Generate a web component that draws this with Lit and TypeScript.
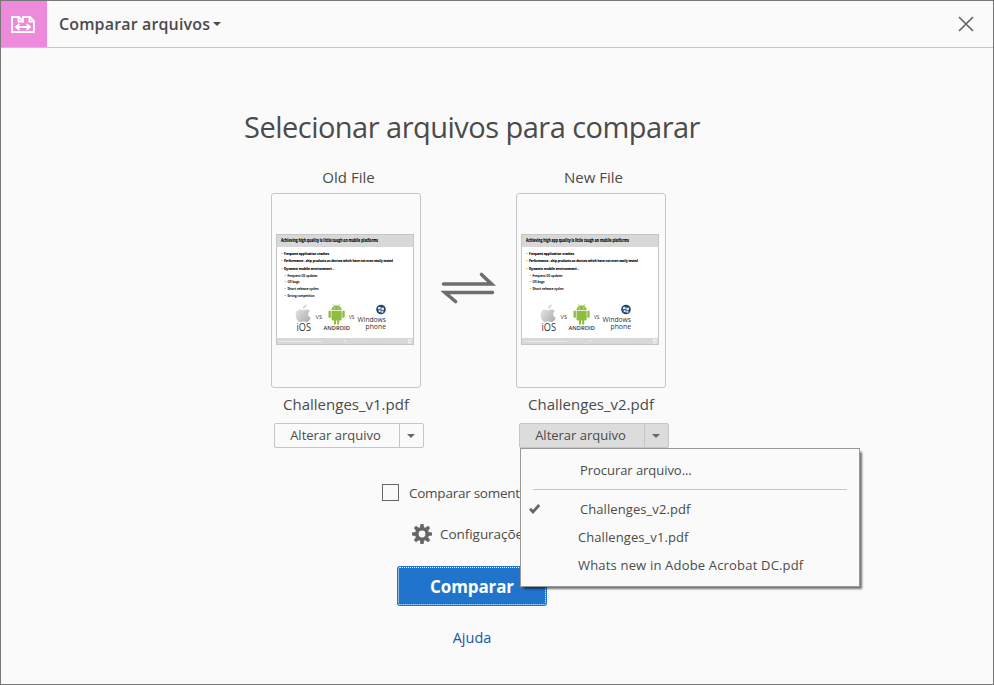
import { LitElement, html, css, svg } from "lit";
import { customElement, property } from "lit/decorators.js";

@customElement("slide-preview")
class SlidePreview extends LitElement {
  @property() heading = "";
  @property({ type: Number }) headingWidth = 97;
  @property({ type: Boolean }) full = false;

  static styles = css`
    :host { display: block; width: 138px; height: 111px; }
    svg { display: block; overflow: visible; }
    text { font-family: "Open Sans", "Noto Sans", sans-serif; }
    .head { font-size: 5px; font-weight: 700; fill: #000; stroke: #000; stroke-width: 0.12px; }
    .item { font-size: 4.1px; font-weight: 700; fill: #000; stroke: #000; stroke-width: 0.15px; }
    .sub { font-size: 3.7px; font-weight: 600; fill: #111; stroke: #111; stroke-width: 0.1px; }
    .os { font-family: "Open Sans", sans-serif; fill: #333; }
    .foot { font-size: 2.4px; fill: #fff; font-weight: 700; }
  `;

  line(label: string, x: number, y: number, width: number, cls: string) {
    return svg`<rect x=${x - 3} y=${y - 2} width="1.6" height="1" fill="#f4b45c"></rect>
      <text class=${cls} x=${x} y=${y} textLength=${width} lengthAdjust="spacingAndGlyphs">${label}</text>`;
  }

  render() {
    return html`<svg width="138" height="111" viewBox="0 0 138 111">
      <defs>
        <linearGradient id="silver" x1="0" y1="0" x2="1" y2="1">
          <stop offset="0" stop-color="#eee"></stop><stop offset="1" stop-color="#aaa"></stop>
        </linearGradient>
      </defs>
      <rect x="0.5" y="0.5" width="137" height="110" fill="#fff" stroke="#c6c6c6"></rect>
      <rect x="1" y="1" width="136" height="12" fill="#d8d8d8"></rect>
      <text class="head" x="5" y="8" textLength=${this.headingWidth} lengthAdjust="spacingAndGlyphs">${this.heading}</text>
      ${this.line("Frequent application crashes", 8, 21, 45, "item")}
      ${this.line("Performance - ship products on devices which have not even easily tested", 8, 28, 109, "item")}
      ${this.line("Dynamic mobile environment –", 8, 36, 50, "item")}
      ${this.line("Frequent OS updates", 11.5, 43, 30, "sub")}
      ${this.line("OS bugs", 11.5, 49, 12, "sub")}
      ${this.line("Short release cycles", 11.5, 56, 31, "sub")}
      ${this.full ? this.line("Strong competition", 11.5, 63, 27, "sub") : ""}
      <path d="M26 74c0-2 1.600-4 4-4.500c.2 2.300-1.700 4.300-4 4.500zM26.500 75.500c1-.2 2-.9 3.700-.7c1.400.2 2.300.7 3 1.600c-2.600 1.700-2.300 5.500.8 6.700c-.9 2.300-2.300 4.400-3.900 4.400c-1.300 0-1.900-.7-3.400-.7s-2 .7-3.300.7c-2.100 0-4.500-4.200-4.500-7.500c0-3.500 2.200-5.300 4.400-5.300c1.500 0 2.500.8 3.200.8z" transform="translate(.7 .7)" fill="url(#silver)"></path>
      <text class="os" x="20.500" y="97" font-size="10" textLength="14.500" lengthAdjust="spacingAndGlyphs">iOS</text>
      <text class="os" x="39.500" y="85" font-size="5.500" textLength="6.500" lengthAdjust="spacingAndGlyphs">VS</text>
      <text class="os" x="73" y="85" font-size="5.500" textLength="5.500" lengthAdjust="spacingAndGlyphs">VS</text>
      <g fill="#8fbe3f">
        <path d="M55.500 76c0-2.800 2.200-4.600 5.100-4.600s5.100 1.800 5.100 4.600zM55.500 76.700h10.200v8.500c0 .7-.5 1.200-1.200 1.200h-1.300v3.300c0 1.300-2 1.300-2 0v-3.300h-1.200v3.300c0 1.300-2 1.300-2 0v-3.300h-1.300c-.7 0-1.200-.5-1.200-1.200z"></path>
        <rect x="52.500" y="76.500" width="2.400" height="7.500" rx="1.200"></rect>
        <rect x="66.300" y="76.500" width="2.400" height="7.500" rx="1.200"></rect>
        <path d="M57.300 70l1.200 2M63.900 70l-1.200 2" stroke="#8fbe3f" stroke-width=".6"></path>
      </g>
      <circle cx="58.500" cy="74" r=".55" fill="#fff"></circle><circle cx="62.700" cy="74" r=".55" fill="#fff"></circle>
      <text class="os" x="47.500" y="96" font-size="5.400" font-weight="600" textLength="26.500" lengthAdjust="spacingAndGlyphs">ANDROID</text>
      <circle cx="105" cy="75.500" r="4.800" fill="#26466f"></circle>
      <path d="M102 73.200q1.500-.8 2.700 0v2.200q-1.200-.8-2.700 0zM105.300 73.500q1.300.7 2.700 0v2.200q-1.400.7-2.700 0zM102.700 76.200q1.100-.6 2 0v2q-1-.6-2 0zM105.300 76.500q1 .5 2 0v2q-1 .5-2 0z" fill="#dce9f6"></path>
      <text class="os" x="81.500" y="88" font-size="7.800" textLength="28.500" lengthAdjust="spacingAndGlyphs">Windows</text>
      <text class="os" x="89.500" y="94.500" font-size="7.800" textLength="20.500" lengthAdjust="spacingAndGlyphs">phone</text>
      <rect x="1" y="104" width="136" height="6" fill="#d8d8d8"></rect>
      <text class="foot" x="3" y="107.800" textLength="43" lengthAdjust="spacingAndGlyphs">© 2012 Adobe Systems Incorporated. All Rights Reserved.</text>
      <rect x="68" y="106.500" width="2" height="1" fill="#f2f2f2"></rect>
      <path d="M132 105.300h3.500v4H132z" fill="#f5f5f5"></path><path d="M132.800 108.500l1-2 1 2" fill="none" stroke="#bbb" stroke-width=".5"></path>
    </svg>`;
  }
}

@customElement("file-picker")
class FilePicker extends LitElement {
  @property() label = "";
  @property() file = "";
  @property() heading = "";
  @property({ type: Number }) headingWidth = 97;
  @property({ type: Boolean }) full = false;
  @property({ type: Boolean }) open = false;

  static styles = css`
    :host { display: flex; flex-direction: column; width: 150px; color: #4b4b4b; font-family: "Open Sans", "Noto Sans", sans-serif; }
    .label { height: 20px; line-height: 20px; font-size: 15px; text-align: center; padding-left: 5px; margin-bottom: 6px; white-space: nowrap; }
    .card { box-sizing: border-box; height: 195px; border: 1px solid #c6c6c6; border-radius: 3px; padding: 40px 0 0 4px; }
    .name { height: 20px; line-height: 20px; margin-top: 6px; font-size: 15px; text-align: center; white-space: nowrap; }
    .split { box-sizing: border-box; display: flex; width: 150px; height: 25px; margin: 9px 0 0 3px; border: 1px solid #c6c6c6; border-radius: 2px; font-size: 13px; line-height: 23px; }
    .split.open { background: #dcdcdc; }
    .main { width: 124px; text-align: center; padding-right: 3px; box-sizing: border-box; white-space: nowrap; }
    .drop { flex: 1; border-left: 1px solid #c6c6c6; display: flex; align-items: center; justify-content: center; }
    .caret { border: 4px solid transparent; border-top-color: #666; border-bottom: 0; margin: 1px 1px 0 0; }
  `;

  render() {
    return html`<div class="label">${this.label}</div>
      <div class="card"><slide-preview .heading=${this.heading} .headingWidth=${this.headingWidth} .full=${this.full}></slide-preview></div>
      <div class="name">${this.file}</div>
      <div class="split ${this.open ? "open" : ""}"><div class="main">Alterar arquivo</div><div class="drop"><div class="caret"></div></div></div>`;
  }
}

@customElement("file-menu")
class FileMenu extends LitElement {
  static styles = css`
    :host { box-sizing: border-box; display: block; width: 340px; height: 139px; background: #fafafa; border: 1px solid #999; box-shadow: 3px 3px 2px -1px rgba(0, 0, 0, 0.55); padding: 7px 12px 0; font: 13px/28px "Open Sans", "Noto Sans", sans-serif; color: #4b4b4b; }
    .row { display: flex; align-items: center; height: 28px; white-space: nowrap; letter-spacing: 0.08px; }
    .row span { margin-left: 45px; }
    .row.active span { margin-left: 47px; }
    .row.browse { letter-spacing: -0.05px; }
    .rule { height: 1px; background: #c6c6c6; margin: 5px 0; }
    .tick { width: 0; overflow: visible; display: flex; }
    svg { flex: none; margin-left: -5px; }
    .row:last-child { letter-spacing: 0.18px; }
  `;

  render() {
    return html`<div class="row active browse"><span>Procurar arquivo...</span></div>
      <div class="rule"></div>
      <div class="row active"><div class="tick"><svg width="14" height="12" viewBox="0 0 14 12"><path d="M2 5.800L5 9L11.200 2" fill="none" stroke="#666" stroke-width="2.800"></path></svg></div><span>Challenges_v2.pdf</span></div>
      <div class="row"><span>Challenges_v1.pdf</span></div>
      <div class="row"><span>Whats new in Adobe Acrobat DC.pdf</span></div>`;
  }
}

@customElement("app-root")
class AppRoot extends LitElement {
  static styles = css`
    :host { box-sizing: border-box; position: relative; display: flex; flex-direction: column; width: 994px; height: 685px; border: 1px solid #777; background: #fafafa; overflow: hidden; color: #4b4b4b; font-family: "Open Sans", "Noto Sans", sans-serif; }
    header { box-sizing: border-box; flex: none; display: flex; align-items: center; height: 47px; border-bottom: 1px solid #c6c6c6; }
    .tool { display: flex; align-items: center; justify-content: center; width: 46px; height: 46px; background: #ee8adc; }
    .tool svg { margin-right: 2px; }
    .title { flex: 1; display: flex; align-items: center; gap: 3px; padding-left: 12px; font-size: 16px; letter-spacing: 0.15px; font-weight: 600; line-height: 22px; }
    .caret { border: 4px solid transparent; border-top-color: #4b4b4b; border-bottom: 0; }
    .close { display: block; margin-right: 19.5px; }
    main { width: 942px; display: flex; flex-direction: column; align-items: center; }
    h1 { margin: 59px 0 0; font-size: 29px; letter-spacing: -0.52px; font-weight: 400; line-height: 40px; height: 40px; white-space: nowrap; }
    .pair { display: flex; width: 395px; margin: 20px 0 0 -7px; }
    .swap { width: 95px; display: flex; justify-content: center; padding-top: 102px; box-sizing: border-box; }
    .option { display: flex; align-items: center; height: 22px; font-size: 13.500px; letter-spacing: -0.25px; white-space: nowrap; width: 561px; align-self: flex-end; }
    .option.only { margin-top: 33px; }
    .only span { padding-top: 2px; }
    .box { box-sizing: border-box; width: 17px; height: 17px; border: 1px solid #666; margin-right: 10px; }
    .option.settings { margin-top: 20px; width: 531px; letter-spacing: -0.05px; }
    .settings svg { margin-right: 8px; }
    .go { box-sizing: border-box; width: 150px; height: 40px; margin-top: 21px; background: #2074cb; border-radius: 3px; padding: 1px; color: #fff; font-size: 17px; font-weight: 700; }
    .ring { box-sizing: border-box; height: 38px; border: 1px dotted #fff; border-radius: 2px; line-height: 38px; text-align: center; letter-spacing: -0.1px; }
    .help { height: 22px; margin-top: 21px; line-height: 22px; font-size: 14.500px; color: #1459a6; }
    file-menu { position: absolute; left: 519px; top: 447px; }
  `;

  render() {
    return html`<header>
        <div class="tool"><svg width="24" height="17" viewBox="0 0 24 17" fill="none" stroke="#fff" stroke-width="1.800">
          <path d="M1 1H8L12 5V1H19L23 5V16H1ZM7.500 1V5.500H12M18.500 1V5.500H23"></path>
          <path d="M5 11H19M8.500 8L5 11L8.500 14M15.500 8L19 11L15.500 14"></path></svg></div>
        <div class="title"><span>Comparar arquivos</span><i class="caret"></i></div>
        <svg class="close" width="16" height="16" viewBox="0 0 16 16"><path d="M1 1L15 15M15 1L1 15" stroke="#666" stroke-width="1.700"></path></svg>
      </header>
      <main>
        <h1>Selecionar arquivos para comparar</h1>
        <div class="pair">
          <file-picker label="Old File" file="Challenges_v1.pdf" heading="Achieving high quality is little tough on mobile platforms" full></file-picker>
          <div class="swap"><svg width="56" height="36" viewBox="0 0 56 36" fill="none" stroke="#6e6e6e" stroke-width="3.600" stroke-linecap="round">
            <path d="M2.500 15H50.500L40.500 5.500"></path><path d="M51.500 23.500H4L14.500 32.500"></path></svg></div>
          <file-picker label="New File" file="Challenges_v2.pdf" heading="Achieving high app quality is little tough on mobile platforms" .headingWidth=${103} open></file-picker>
        </div>
        <div class="option only"><div class="box"></div><span>Comparar somente texto</span></div>
        <div class="option settings"><svg width="20" height="20" viewBox="-10 -10 20 20">
          <g fill="#666">${[0, 45, 90, 135].map((a) => svg`<path d="M-1.500 -10H1.500L2.300 -5V5L1.500 10H-1.500L-2.300 5V-5Z" transform=${`rotate(${a})`}></path>`)}<circle r="7"></circle></g>
          <circle r="3.400" fill="#fafafa"></circle></svg>Configurações</div>
        <div class="go"><div class="ring">Comparar</div></div>
        <div class="help">Ajuda</div>
      </main>
      <file-menu></file-menu>`;
  }
}
